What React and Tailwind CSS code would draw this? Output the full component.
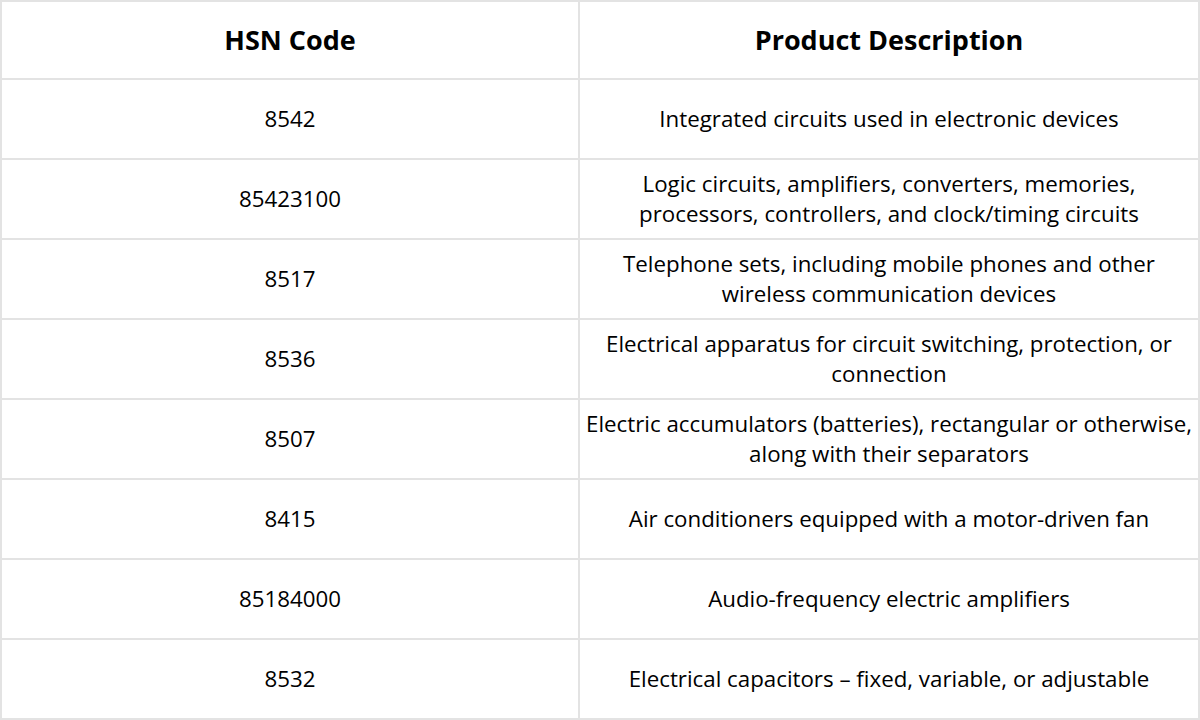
const rows = [
    ['8542', ['Integrated circuits used in electronic devices']],
    ['85423100', ['Logic circuits, amplifiers, converters, memories,', 'processors, controllers, and clock/timing circuits']],
    ['8517', ['Telephone sets, including mobile phones and other', 'wireless communication devices']],
    ['8536', ['Electrical apparatus for circuit switching, protection, or', 'connection']],
    ['8507', ['Electric accumulators (batteries), rectangular or otherwise,', 'along with their separators']],
    ['8415', ['Air conditioners equipped with a motor-driven fan']],
    ['85184000', ['Audio-frequency electric amplifiers']],
    ['8532', ['Electrical capacitors – fixed, variable, or adjustable']],
];

const App = () => {
    return (
        <div className="w-[1200px] h-[720px] bg-white text-black font-['Open_Sans',sans-serif]">
            <div className="grid grid-cols-[578px_1fr] border-t-2 border-l-2 border-[#e3e3e3]">
                {/* Header */}
                <div className="h-[78px] flex items-center justify-center border-r-2 border-b-2 border-[#e3e3e3] text-[27px] font-bold">
                    HSN Code
                </div>
                <div className="h-[78px] flex items-center justify-center border-r-2 border-b-2 border-[#e3e3e3] text-[27px] font-bold">
                    Product Description
                </div>

                {/* Body */}
                {rows.map(([code, desc]) => (
                    <div key={code} className="contents">
                        <div className="h-[80px] flex items-center justify-center border-r-2 border-b-2 border-[#e3e3e3] text-[22.3px]">
                            {code}
                        </div>
                        <div className="h-[80px] flex flex-col items-center justify-center border-r-2 border-b-2 border-[#e3e3e3] text-[22.3px] leading-[30px] text-center">
                            {desc.map((line) => (
                                <span key={line} className="whitespace-nowrap">{line}</span>
                            ))}
                        </div>
                    </div>
                ))}
            </div>
        </div>
    );
};

export default App;
